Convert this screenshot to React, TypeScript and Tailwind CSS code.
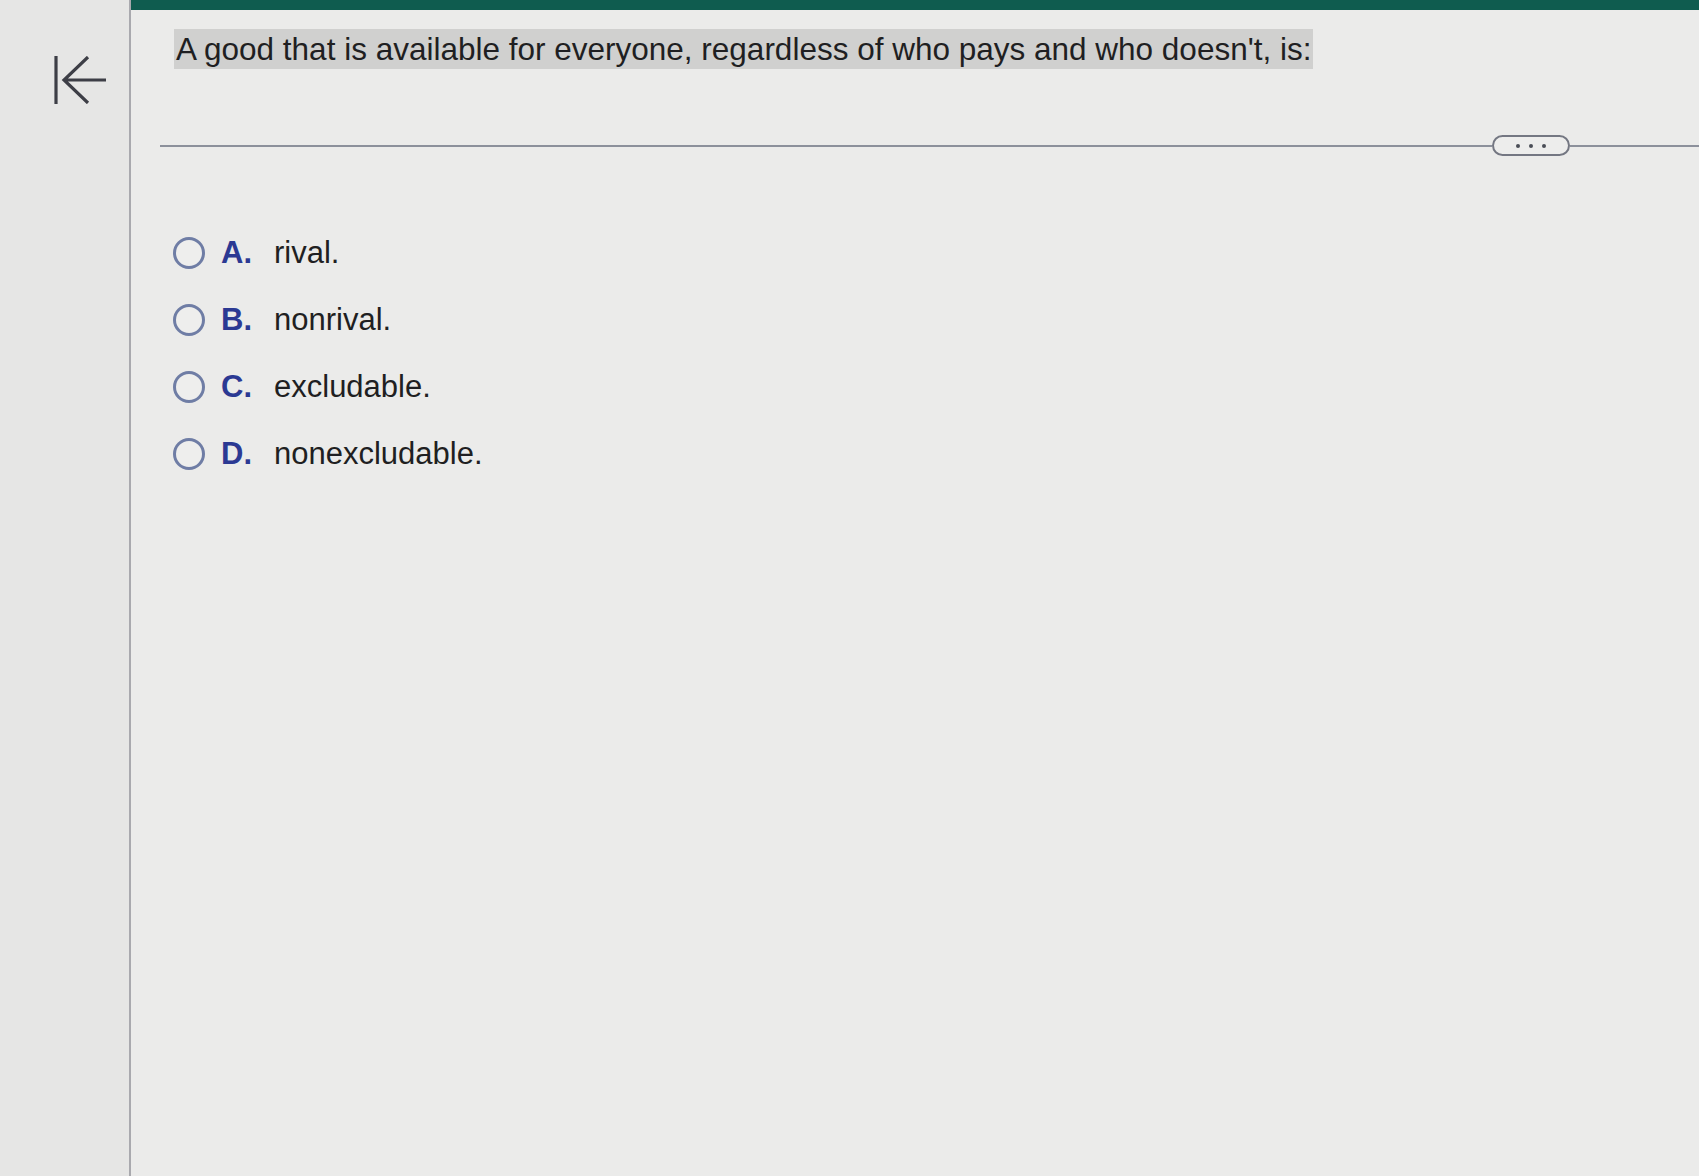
const options = [
  { letter: "A.", text: "rival." },
  { letter: "B.", text: "nonrival." },
  { letter: "C.", text: "excludable." },
  { letter: "D.", text: "nonexcludable." },
];

function FirstPageIcon() {
  return (
    <svg width="52" height="48" viewBox="0 0 52 48" fill="none">
      <path d="M2 0 V48" stroke="#3d3e46" strokeWidth="3.2" />
      <path d="M10 24 H52 M34 1 L10 24 L34 47" stroke="#3d3e46" strokeWidth="3.2" strokeLinejoin="miter" />
    </svg>
  );
}

export default function App() {
  return (
    <div className="flex h-[1176px] w-[1699px] overflow-hidden bg-[#ebebea] font-['Liberation_Sans',Arial,sans-serif] text-[#1f1f22]">
      {/* Sidebar */}
      <aside className="w-[131px] shrink-0 border-r-2 border-[#a9a9ae] bg-[#e6e6e5] pl-[54px] pt-[56px]">
        <button className="block">
          <FirstPageIcon />
        </button>
      </aside>

      {/* Main */}
      <main className="flex flex-1 flex-col">
        <div className="h-[10px] bg-[#0f5c4f]" />

        {/* Question */}
        <div className="mt-[19px] pl-[43px]">
          <span className="inline-block bg-[#d0d0cf] px-[2px] text-[31.5px] leading-[40px]">
            A good that is available for everyone, regardless of who pays and who doesn't, is:
          </span>
        </div>

        {/* Divider with more button */}
        <div className="ml-[29px] mt-[66px] flex h-[21px] items-center">
          <div className="h-[2px] w-[1332px] bg-[#8c909b]" />
          <button className="flex h-[21px] w-[78px] items-center justify-center gap-[9px] rounded-full border-2 border-[#747782] bg-[#ededec]">
            <span className="h-[4px] w-[4px] rounded-full bg-[#4a4d57]" />
            <span className="h-[4px] w-[4px] rounded-full bg-[#4a4d57]" />
            <span className="h-[4px] w-[4px] rounded-full bg-[#4a4d57]" />
          </button>
          <div className="h-[2px] flex-1 bg-[#8c909b]" />
        </div>

        {/* Options */}
        <ul className="mt-[63px] pl-[42px]">
          {options.map((o) => (
            <li key={o.letter} className="flex h-[67px] items-center">
              <span className="h-[32px] w-[32px] shrink-0 rounded-full border-[3px] border-[#6f7da5] bg-[#eeeeed]" />
              <span className="ml-[16px] w-[53px] text-[31px] font-bold leading-none text-[#2b3993]">{o.letter}</span>
              <span className="text-[31px] leading-none">{o.text}</span>
            </li>
          ))}
        </ul>
      </main>
    </div>
  );
}
